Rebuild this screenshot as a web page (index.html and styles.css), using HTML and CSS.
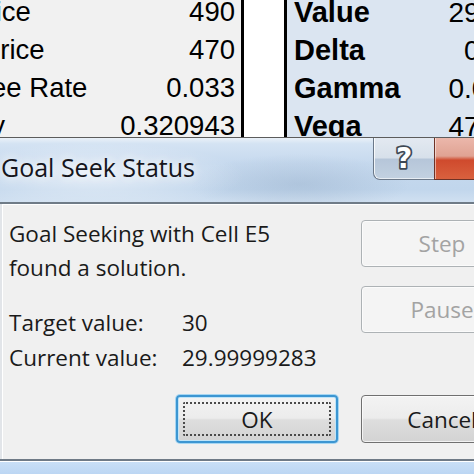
FILE: index.html
```html
<!DOCTYPE html>
<html>
<head>
<meta charset="utf-8">
<link rel="stylesheet" href="styles.css">
</head>
<body>
<div class="page">
  <div class="sheet">
    <div class="cells-left">
      <div class="grid grid-left">
        <div class="row"><span>Spot Price</span><span>490</span></div>
        <div class="row"><span>Strike Price</span><span>470</span></div>
        <div class="row"><span>Risk Free Rate</span><span>0.033</span></div>
        <div class="row"><span>Volatility</span><span>0.320943</span></div>
      </div>
    </div>
    <div class="col-white"></div>
    <div class="cells-right">
      <div class="grid grid-right">
        <div class="row"><span class="blbl">Value</span><span>29.99999283</span></div>
        <div class="row"><span class="blbl">Delta</span><span>0.61234567</span></div>
        <div class="row"><span class="blbl">Gamma</span><span>0.001234567</span></div>
        <div class="row"><span class="blbl">Vega</span><span>47.12345678</span></div>
      </div>
    </div>
  </div>

  <div class="dialog">
    <div class="titlebar">
      <div class="title">Goal Seek Status</div>
      <div class="caption">
        <div class="btn-help">
          <svg width="28" height="32" viewBox="0 0 28 32"><text x="14" y="26" text-anchor="middle" font-family="DejaVu Sans" font-weight="bold" font-size="28" fill="#ffffff" stroke="#3e4854" stroke-width="3.5" stroke-linejoin="round" paint-order="stroke">?</text></svg>
        </div>
        <div class="btn-close"></div>
      </div>
    </div>
    <div class="body">
      <div class="top">
        <div class="msg">
          <p class="lead">Goal Seeking with Cell E5<br>found a solution.</p>
          <div class="stats">
            <span>Target value:</span><span>30</span>
            <span>Current value:</span><span>29.99999283</span>
          </div>
        </div>
        <div class="side">
          <button class="btn" disabled>Step</button>
          <button class="btn" disabled>Pause</button>
        </div>
      </div>
      <div class="actions">
        <button class="btn btn-ok"><span class="focus">OK</span></button>
        <button class="btn btn-cancel">Cancel</button>
      </div>
    </div>
    <div class="frame-bottom"></div>
  </div>
</div>
</body>
</html>
```

FILE: styles.css
```css
html, body {
  margin: 0;
  padding: 0;
}
body {
  width: 474px;
  height: 474px;
  overflow: hidden;
  background: #f0f0f0;
}
.page {
  width: 620px;
}

/* spreadsheet */
.sheet {
  display: flex;
  height: 137px;
  border-bottom: 1px solid #5c5c5c;
  overflow: hidden;
  font-family: "Liberation Sans", Arial, sans-serif;
  color: #000;
}
.cells-left {
  width: 241px;
  flex: none;
  background: #f1f1f1;
  overflow: hidden;
  border-right: 3px solid #000;
}
.col-white {
  width: 40px;
  flex: none;
  background: #fff;
  border-right: 3px solid #000;
}
.cells-right {
  width: 335px;
  flex: none;
  box-sizing: border-box;
  background: #dbe5f1;
  padding: 0 10px 0 7px;
  overflow: hidden;
}
.grid {
  margin-top: -7px;
}
.grid-left {
  margin-left: -96px;
  padding-right: 6px;
  font-size: 27.5px;
}
.grid-right {
  font-size: 28px;
}
.row {
  display: flex;
  justify-content: space-between;
  align-items: baseline;
  height: 38px;
  line-height: 38px;
  white-space: nowrap;
}
.blbl {
  font-weight: bold;
  font-size: 29px;
}

/* dialog */
.dialog {
  width: 540px;
  background: #e2e5e9;
  font-family: "Open Sans", "Noto Sans", sans-serif;
  color: #1e1e1e;
}
.titlebar {
  display: flex;
  height: 64px;
  border-bottom: 2px solid #6f7b87;
  background:
    radial-gradient(ellipse 150px 34px at 95px 38px, rgba(255,255,255,0.55), rgba(255,255,255,0)),
    radial-gradient(ellipse 110px 30px at 300px 46px, rgba(120,145,175,0.25), rgba(120,145,175,0)),
    linear-gradient(180deg, #eaf1f8 0, #d4e3f3 9%, #c6d9ee 40%, #c1d6ec 80%, #d0e0f1 100%);
}
.title {
  flex: 1;
  padding: 12px 0 0 1px;
  font-size: 25px;
  line-height: 34px;
  color: #15151c;
  text-shadow: 0 0 8px rgba(255,255,255,0.9), 0 0 14px rgba(255,255,255,0.7);
}
.caption {
  display: flex;
  height: 42px;
  margin-right: 8px;
}
.btn-help {
  width: 61px;
  box-sizing: border-box;
  border: 1px solid #6b7889;
  border-top: none;
  border-right: none;
  border-radius: 0 0 0 7px;
  background: linear-gradient(180deg, #e3e9f1 0, #d7e0ea 48%, #b6c6d9 52%, #c2d1e1 100%);
  box-shadow: inset 1px 0 0 rgba(255,255,255,0.8), inset 0 -1px 0 rgba(255,255,255,0.6);
  display: flex;
  align-items: center;
  justify-content: center;
}
.btn-help svg {
  display: block;
  margin-top: -1px;
}
.btn-close {
  width: 98px;
  box-sizing: border-box;
  border: 1px solid #6e3226;
  border-top: none;
  border-radius: 0 0 7px 0;
  background: linear-gradient(180deg, #ebb7ab 0, #e0a393 44%, #cf4a2d 54%, #d9613e 100%);
  box-shadow: inset 1px 0 0 rgba(255,255,255,0.5);
}

.body {
  height: 255px;
  box-sizing: border-box;
  margin-left: 2px;
  border-left: 1px solid #fff;
  border-top: 1px solid #fff;
  background: #f0f0f0;
  padding: 0 17px 16px 6px;
  display: flex;
  flex-direction: column;
}
.top {
  display: flex;
  justify-content: space-between;
}
.msg {
  padding-top: 12px;
  font-size: 22.5px;
  color: #1a1a1a;
}
.lead {
  margin: 0;
  line-height: 34px;
}
.stats {
  display: grid;
  grid-template-columns: 173px auto;
  line-height: 35px;
  margin-top: 20px;
}
.side {
  padding-top: 15px;
  display: flex;
  flex-direction: column;
  gap: 19px;
}
.actions {
  margin-top: auto;
  display: flex;
  justify-content: flex-end;
  gap: 23px;
}
.btn {
  width: 162px;
  height: 48px;
  box-sizing: border-box;
  padding: 0;
  font-family: "Open Sans", "Noto Sans", sans-serif;
  font-size: 22.5px;
  color: #1a1a1a;
  border: 1px solid #707070;
  border-radius: 4px;
  background: linear-gradient(180deg, #f3f3f3 0, #ececec 48%, #dedede 52%, #d3d3d3 100%);
  box-shadow: inset 0 0 0 1px rgba(255,255,255,0.7);
}
.side .btn {
  height: 47px;
}
.btn:disabled {
  color: #a3a3a3;
  border-color: #adb2b5;
  background: #f4f4f4;
  box-shadow: inset 0 0 0 1px #fbfbfb;
}
.btn-ok {
  border: 2px solid #3c96d2;
  box-shadow: 0 0 0 1px #a6d6f2, inset 0 0 0 1px #bfe4f8;
  padding: 5px;
}
.focus {
  display: flex;
  align-items: center;
  justify-content: center;
  height: 100%;
  box-sizing: border-box;
  border: 2px dotted #4a4a4a;
  border-radius: 2px;
}
.frame-bottom {
  height: 13px;
  border-top: 2px solid #6f7a86;
  background: linear-gradient(180deg, #ffffff 0, #ffffff 1px, #c9dff6 1px, #bcd6f3 100%);
}
```
